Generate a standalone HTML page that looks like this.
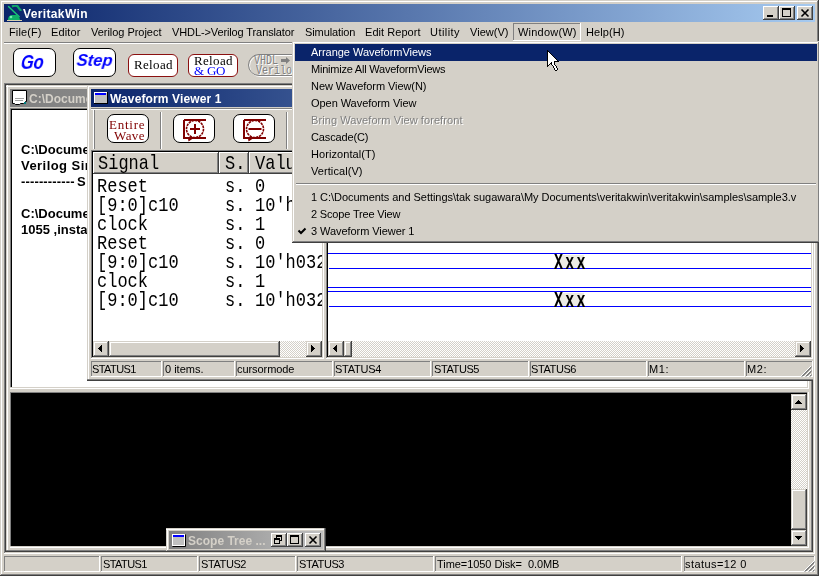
<!DOCTYPE html><html><head><meta charset="utf-8"><style>html,body{margin:0;padding:0;width:819px;height:576px;overflow:hidden;background:#d4d0c8}body>div,body>svg{position:absolute}div div,div svg{position:absolute}.t{will-change:transform}</style></head><body><div style="left:0px;top:0px;width:819px;height:576px;background:#d4d0c8;"></div><div style="left:1px;top:1px;width:817px;height:1px;background:#ffffff;"></div><div style="left:1px;top:1px;width:1px;height:573px;background:#ffffff;"></div><div style="left:817px;top:1px;width:1px;height:574px;background:#808080;"></div><div style="left:1px;top:574px;width:817px;height:1px;background:#808080;"></div><div style="left:818px;top:0px;width:1px;height:576px;background:#404040;"></div><div style="left:0px;top:575px;width:819px;height:1px;background:#404040;"></div><div style="left:4px;top:4px;width:811px;height:18px;background:#0a246a;background:linear-gradient(to right,#0a246a,#a6caf0);"></div><svg style="left:6px;top:5px" width="16" height="16" viewBox="0 0 16 16">
<path d="M2.2 1.2 L13.5 12" stroke="#18c878" stroke-width="1.5"/>
<path d="M6 1.5 Q9 0 11.5 1.2 L13 3.5 L14.5 5 L14.5 6" stroke="#10a868" stroke-width="2.2" fill="none" stroke-linejoin="round"/>
<path d="M2 15 Q2 10.5 6 10 L11 10 Q13.5 11 14 15 Z" fill="#10b068"/>
<circle cx="5" cy="12" r="1.3" fill="#70f0b0"/>
<rect x="1" y="15" width="15" height="1" fill="#d8d0b0"/>
</svg><div class="t" style="left:23px;top:8px;font:bold 12px 'Liberation Sans', sans-serif;line-height:1;color:#fff;white-space:pre;letter-spacing:0.363px;">VeritakWin</div><div style="left:763px;top:6px;width:16px;height:14px;background:#d4d0c8;"></div><div style="left:763px;top:19px;width:16px;height:1px;background:#404040;"></div><div style="left:778px;top:6px;width:1px;height:14px;background:#404040;"></div><div style="left:763px;top:6px;width:15px;height:1px;background:#ffffff;"></div><div style="left:763px;top:6px;width:1px;height:13px;background:#ffffff;"></div><div style="left:764px;top:7px;width:13px;height:1px;background:#d4d0c8;"></div><div style="left:764px;top:7px;width:1px;height:11px;background:#d4d0c8;"></div><div style="left:764px;top:18px;width:14px;height:1px;background:#808080;"></div><div style="left:777px;top:7px;width:1px;height:12px;background:#808080;"></div><div style="left:767px;top:15px;width:6px;height:2px;background:#000000;"></div><div style="left:779px;top:6px;width:16px;height:14px;background:#d4d0c8;"></div><div style="left:779px;top:19px;width:16px;height:1px;background:#404040;"></div><div style="left:794px;top:6px;width:1px;height:14px;background:#404040;"></div><div style="left:779px;top:6px;width:15px;height:1px;background:#ffffff;"></div><div style="left:779px;top:6px;width:1px;height:13px;background:#ffffff;"></div><div style="left:780px;top:7px;width:13px;height:1px;background:#d4d0c8;"></div><div style="left:780px;top:7px;width:1px;height:11px;background:#d4d0c8;"></div><div style="left:780px;top:18px;width:14px;height:1px;background:#808080;"></div><div style="left:793px;top:7px;width:1px;height:12px;background:#808080;"></div><div style="left:782px;top:8px;width:9px;height:9px;background:transparent;border:1px solid #000;border-top-width:2px;box-sizing:border-box;"></div><div style="left:797px;top:6px;width:16px;height:14px;background:#d4d0c8;"></div><div style="left:797px;top:19px;width:16px;height:1px;background:#404040;"></div><div style="left:812px;top:6px;width:1px;height:14px;background:#404040;"></div><div style="left:797px;top:6px;width:15px;height:1px;background:#ffffff;"></div><div style="left:797px;top:6px;width:1px;height:13px;background:#ffffff;"></div><div style="left:798px;top:7px;width:13px;height:1px;background:#d4d0c8;"></div><div style="left:798px;top:7px;width:1px;height:11px;background:#d4d0c8;"></div><div style="left:798px;top:18px;width:14px;height:1px;background:#808080;"></div><div style="left:811px;top:7px;width:1px;height:12px;background:#808080;"></div><svg style="left:797px;top:6px" width="16" height="14"><path d="M4.5 3.5 L11.5 10.5 M11.5 3.5 L4.5 10.5" stroke="#000" stroke-width="1.6"/></svg><div class="t" style="left:9px;top:27px;font:11px 'Liberation Sans', sans-serif;line-height:1;color:#000;white-space:pre;letter-spacing:0.125px;">File(F)</div><div class="t" style="left:51px;top:27px;font:11px 'Liberation Sans', sans-serif;line-height:1;color:#000;white-space:pre;letter-spacing:0.150px;">Editor</div><div class="t" style="left:91px;top:27px;font:11px 'Liberation Sans', sans-serif;line-height:1;color:#000;white-space:pre;letter-spacing:-0.032px;">Verilog Project</div><div class="t" style="left:172px;top:27px;font:11px 'Liberation Sans', sans-serif;line-height:1;color:#000;white-space:pre;letter-spacing:-0.111px;">VHDL-&gt;Verilog Translator</div><div class="t" style="left:305px;top:27px;font:11px 'Liberation Sans', sans-serif;line-height:1;color:#000;white-space:pre;letter-spacing:-0.097px;">Simulation</div><div class="t" style="left:365px;top:27px;font:11px 'Liberation Sans', sans-serif;line-height:1;color:#000;white-space:pre;letter-spacing:0.044px;">Edit Report</div><div class="t" style="left:430px;top:27px;font:11px 'Liberation Sans', sans-serif;line-height:1;color:#000;white-space:pre;letter-spacing:0.438px;">Utility</div><div class="t" style="left:470px;top:27px;font:11px 'Liberation Sans', sans-serif;line-height:1;color:#000;white-space:pre;letter-spacing:0.034px;">View(V)</div><div class="t" style="left:518px;top:27px;font:11px 'Liberation Sans', sans-serif;line-height:1;color:#000;white-space:pre;letter-spacing:0.211px;">Window(W)</div><div class="t" style="left:586px;top:27px;font:11px 'Liberation Sans', sans-serif;line-height:1;color:#000;white-space:pre;letter-spacing:0.104px;">Help(H)</div><div style="left:513px;top:23px;width:68px;height:1px;background:#808080;"></div><div style="left:513px;top:23px;width:1px;height:18px;background:#808080;"></div><div style="left:513px;top:40px;width:68px;height:1px;background:#ffffff;"></div><div style="left:580px;top:23px;width:1px;height:18px;background:#ffffff;"></div><div style="left:4px;top:42px;width:811px;height:1px;background:#808080;"></div><div style="left:4px;top:43px;width:811px;height:1px;background:#ffffff;"></div><div style="left:13px;top:48px;width:43px;height:29px;background:#fff;border:1px solid #000000;border-radius:7px;box-sizing:border-box;"></div><div class="t" style="left:20px;top:51px;font:bold italic 21px 'Liberation Sans', sans-serif;line-height:1;color:#0000ff;white-space:pre;transform:scaleX(0.78) skewX(-8deg);transform-origin:0 100%;">Go</div><div style="left:73px;top:48px;width:43px;height:29px;background:#fff;border:1px solid #000000;border-radius:7px;box-sizing:border-box;"></div><div class="t" style="left:76px;top:52px;font:bold italic 17px 'Liberation Sans', sans-serif;line-height:1;color:#0000ff;white-space:pre;transform:scaleX(0.97) skewX(-6deg);transform-origin:0 100%;">Step</div><div style="left:128px;top:54px;width:50px;height:23px;background:#fff;border:1px solid #8b1010;border-radius:6px;box-sizing:border-box;"></div><div class="t" style="left:134px;top:58px;font:13px 'Liberation Serif', serif;line-height:1;color:#000;white-space:pre;letter-spacing:0.338px;">Reload</div><div style="left:188px;top:54px;width:50px;height:23px;background:#fff;border:1px solid #8b1010;border-radius:6px;box-sizing:border-box;"></div><div class="t" style="left:194px;top:54px;font:13px 'Liberation Serif', serif;line-height:1;color:#000;white-space:pre;letter-spacing:0.338px;">Reload</div><div class="t" style="left:194px;top:64px;font:13px 'Liberation Serif', serif;line-height:1;color:#0000ff;white-space:pre;letter-spacing:-0.214px;">&amp; GO</div><div style="left:248px;top:54px;width:44px;height:23px;overflow:hidden"><div style="left:1px;top:1px;width:70px;height:22px;border:1px solid #fff;border-radius:11px;box-sizing:border-box;"></div><div style="left:0;top:0;width:70px;height:22px;border:1px solid #808080;border-radius:11px;box-sizing:border-box;"></div><div style="left:7px;top:2px;font:10px 'Liberation Mono', monospace;line-height:1;color:#fff;white-space:pre;transform:scaleY(1.35);transform-origin:0 0">VHDL</div><div style="left:6px;top:1px;font:10px 'Liberation Mono', monospace;line-height:1;color:#808080;white-space:pre;transform:scaleY(1.35);transform-origin:0 0">VHDL</div><svg style="left:32px;top:2px" width="12" height="9"><path d="M1 3 H6 V1 L10 4.5 L6 8 V6 H1 Z" fill="#808080"/></svg><div style="left:9px;top:12px;font:10px 'Liberation Mono', monospace;line-height:1;color:#fff;white-space:pre;transform:scaleY(1.35);transform-origin:0 0">Verilog</div><div style="left:8px;top:11px;font:10px 'Liberation Mono', monospace;line-height:1;color:#808080;white-space:pre;transform:scaleY(1.35);transform-origin:0 0">Verilog</div></div><div style="left:4px;top:83px;width:810px;height:1px;background:#808080;"></div><div style="left:4px;top:83px;width:1px;height:471px;background:#808080;"></div><div style="left:5px;top:84px;width:808px;height:1px;background:#404040;"></div><div style="left:5px;top:84px;width:1px;height:469px;background:#404040;"></div><div style="left:814px;top:83px;width:1px;height:471px;background:#ffffff;"></div><div style="left:4px;top:553px;width:811px;height:1px;background:#ffffff;"></div><div style="left:813px;top:84px;width:1px;height:469px;background:#d4d0c8;"></div><div style="left:5px;top:552px;width:809px;height:1px;background:#d4d0c8;"></div><div style="left:7px;top:85px;width:1px;height:467px;background:#ffffff;"></div><div style="left:6px;top:86px;width:81px;height:1px;background:#ffffff;"></div><div style="left:10px;top:89px;width:77px;height:18px;background:#808080;background:linear-gradient(to right,#808080,#c0c0c0 800px);"></div><svg style="left:12px;top:90px" width="16" height="16" viewBox="0 0 16 16">
<path d="M0.5 0.5 H14.5 V11.5 L13.5 11.5 L12.5 12.5 L11.5 13.5 L8.5 13.5 L7.5 14.5 L3.5 14.5 L2.5 13.5 L0.5 13.5 Z" fill="#fff" stroke="#000"/>
<path d="M3 8.5 H12 M3 10.5 H11" stroke="#a0a0a0"/>
<rect x="12" y="12" width="2" height="2" fill="#008080"/>
</svg><div class="t" style="left:29px;top:93px;font:bold 12px 'Liberation Sans', sans-serif;line-height:1;color:#d4d0c8;white-space:pre;">C:\Documents and Settings</div><div style="left:10px;top:108px;width:1px;height:279px;background:#808080;"></div><div style="left:10px;top:108px;width:797px;height:1px;background:#808080;"></div><div style="left:11px;top:109px;width:1px;height:278px;background:#000000;"></div><div style="left:11px;top:109px;width:796px;height:1px;background:#000000;"></div><div style="left:12px;top:110px;width:795px;height:277px;background:#ffffff;"></div><div style="left:10px;top:387px;width:798px;height:1px;background:#d4d0c8;"></div><div style="left:10px;top:388px;width:799px;height:1px;background:#ffffff;"></div><div style="left:807px;top:108px;width:1px;height:280px;background:#d4d0c8;"></div><div style="left:808px;top:108px;width:1px;height:281px;background:#ffffff;"></div><div style="left:811px;top:85px;width:1px;height:308px;background:#808080;"></div><div style="left:812px;top:85px;width:1px;height:308px;background:#404040;"></div><div class="t" style="left:21px;top:143px;font:bold 13px 'Liberation Sans', sans-serif;line-height:1;color:#000;white-space:pre;">C:\Documents and Settings</div><div class="t" style="left:21px;top:159px;font:bold 13px 'Liberation Sans', sans-serif;line-height:1;color:#000;white-space:pre;letter-spacing:0.45px;">Verilog Simulator </div><div class="t" style="left:21px;top:207px;font:bold 13px 'Liberation Sans', sans-serif;line-height:1;color:#000;white-space:pre;">C:\Documents and Settings</div><div class="t" style="left:21px;top:223px;font:bold 13px 'Liberation Sans', sans-serif;line-height:1;color:#000;white-space:pre;">1055 ,instance</div><div class="t" style="left:21px;top:175px;font:bold 13px 'Liberation Sans', sans-serif;line-height:1;color:#000;white-space:pre;letter-spacing:0.142px;">------------</div><div class="t" style="left:77px;top:175px;font:bold 13px 'Liberation Sans', sans-serif;line-height:1;color:#000;white-space:pre;">S</div><div style="left:10px;top:392px;width:1px;height:155px;background:#808080;"></div><div style="left:10px;top:392px;width:797px;height:1px;background:#808080;"></div><div style="left:11px;top:393px;width:1px;height:153px;background:#000000;"></div><div style="left:11px;top:393px;width:796px;height:1px;background:#000000;"></div><div style="left:12px;top:394px;width:779px;height:152px;background:#000000;"></div><div style="left:791px;top:410px;width:16px;height:79px;background:#d4d0c8;background-image:repeating-conic-gradient(#fff 0 25%,#d4d0c8 0 50%);background-size:2px 2px;"></div><div style="left:791px;top:394px;width:16px;height:16px;background:#d4d0c8;"></div><div style="left:791px;top:409px;width:16px;height:1px;background:#404040;"></div><div style="left:806px;top:394px;width:1px;height:16px;background:#404040;"></div><div style="left:791px;top:394px;width:15px;height:1px;background:#d4d0c8;"></div><div style="left:791px;top:394px;width:1px;height:15px;background:#d4d0c8;"></div><div style="left:792px;top:395px;width:13px;height:1px;background:#ffffff;"></div><div style="left:792px;top:395px;width:1px;height:13px;background:#ffffff;"></div><div style="left:792px;top:408px;width:14px;height:1px;background:#808080;"></div><div style="left:805px;top:395px;width:1px;height:14px;background:#808080;"></div><svg style="left:791px;top:394px" width="16" height="16" shape-rendering="crispEdges" fill="#000"><rect x="7" y="6" width="1" height="1"/><rect x="6" y="7" width="3" height="1"/><rect x="5" y="8" width="5" height="1"/><rect x="4" y="9" width="7" height="1"/></svg><div style="left:791px;top:489px;width:16px;height:41px;background:#d4d0c8;"></div><div style="left:791px;top:529px;width:16px;height:1px;background:#404040;"></div><div style="left:806px;top:489px;width:1px;height:41px;background:#404040;"></div><div style="left:791px;top:489px;width:15px;height:1px;background:#d4d0c8;"></div><div style="left:791px;top:489px;width:1px;height:40px;background:#d4d0c8;"></div><div style="left:792px;top:490px;width:13px;height:1px;background:#ffffff;"></div><div style="left:792px;top:490px;width:1px;height:38px;background:#ffffff;"></div><div style="left:792px;top:528px;width:14px;height:1px;background:#808080;"></div><div style="left:805px;top:490px;width:1px;height:39px;background:#808080;"></div><div style="left:791px;top:530px;width:16px;height:16px;background:#d4d0c8;"></div><div style="left:791px;top:545px;width:16px;height:1px;background:#404040;"></div><div style="left:806px;top:530px;width:1px;height:16px;background:#404040;"></div><div style="left:791px;top:530px;width:15px;height:1px;background:#d4d0c8;"></div><div style="left:791px;top:530px;width:1px;height:15px;background:#d4d0c8;"></div><div style="left:792px;top:531px;width:13px;height:1px;background:#ffffff;"></div><div style="left:792px;top:531px;width:1px;height:13px;background:#ffffff;"></div><div style="left:792px;top:544px;width:14px;height:1px;background:#808080;"></div><div style="left:805px;top:531px;width:1px;height:14px;background:#808080;"></div><svg style="left:791px;top:530px" width="16" height="16" shape-rendering="crispEdges" fill="#000"><rect x="4" y="6" width="7" height="1"/><rect x="5" y="7" width="5" height="1"/><rect x="6" y="8" width="3" height="1"/><rect x="7" y="9" width="1" height="1"/></svg><div style="left:10px;top:546px;width:799px;height:1px;background:#d4d0c8;"></div><div style="left:807px;top:392px;width:1px;height:155px;background:#d4d0c8;"></div><div style="left:10px;top:547px;width:799px;height:1px;background:#ffffff;"></div><div style="left:808px;top:392px;width:1px;height:156px;background:#ffffff;"></div><div style="left:6px;top:550px;width:807px;height:1px;background:#808080;"></div><div style="left:811px;top:390px;width:1px;height:161px;background:#808080;"></div><div style="left:6px;top:551px;width:807px;height:1px;background:#404040;"></div><div style="left:812px;top:390px;width:1px;height:162px;background:#404040;"></div><div style="left:166px;top:528px;width:160px;height:24px;background:#d4d0c8;"></div><div style="left:166px;top:529px;width:159px;height:1px;background:#ffffff;"></div><div style="left:167px;top:529px;width:1px;height:22px;background:#ffffff;"></div><div style="left:324px;top:528px;width:1px;height:23px;background:#808080;"></div><div style="left:167px;top:550px;width:158px;height:1px;background:#808080;"></div><div style="left:325px;top:528px;width:1px;height:24px;background:#404040;"></div><div style="left:166px;top:551px;width:160px;height:1px;background:#404040;"></div><div style="left:169px;top:531px;width:154px;height:18px;background:#808080;background:linear-gradient(to right,#808080,#c0c0c0);"></div><svg style="left:171px;top:533px" width="16" height="16" viewBox="0 0 16 16"><rect x="1.5" y="1.5" width="12" height="11" fill="#c0c0c0" stroke="#fff"/><path d="M14.5 1.5 V13.5 H1.5" stroke="#000" fill="none"/><rect x="2" y="2" width="11" height="2" fill="#0000ff"/></svg><div class="t" style="left:188px;top:535px;font:bold 12px 'Liberation Sans', sans-serif;line-height:1;color:#d4d0c8;white-space:pre;letter-spacing:0.013px;">Scope Tree ...</div><div style="left:271px;top:533px;width:16px;height:14px;background:#d4d0c8;"></div><div style="left:271px;top:546px;width:16px;height:1px;background:#404040;"></div><div style="left:286px;top:533px;width:1px;height:14px;background:#404040;"></div><div style="left:271px;top:533px;width:15px;height:1px;background:#ffffff;"></div><div style="left:271px;top:533px;width:1px;height:13px;background:#ffffff;"></div><div style="left:272px;top:534px;width:13px;height:1px;background:#d4d0c8;"></div><div style="left:272px;top:534px;width:1px;height:11px;background:#d4d0c8;"></div><div style="left:272px;top:545px;width:14px;height:1px;background:#808080;"></div><div style="left:285px;top:534px;width:1px;height:12px;background:#808080;"></div><div style="left:276px;top:535px;width:6px;height:6px;background:transparent;border:1px solid #000;border-top-width:2px;box-sizing:border-box;"></div><div style="left:274px;top:538px;width:6px;height:6px;background:#d4d0c8;border:1px solid #000;border-top-width:2px;box-sizing:border-box;"></div><div style="left:287px;top:533px;width:16px;height:14px;background:#d4d0c8;"></div><div style="left:287px;top:546px;width:16px;height:1px;background:#404040;"></div><div style="left:302px;top:533px;width:1px;height:14px;background:#404040;"></div><div style="left:287px;top:533px;width:15px;height:1px;background:#ffffff;"></div><div style="left:287px;top:533px;width:1px;height:13px;background:#ffffff;"></div><div style="left:288px;top:534px;width:13px;height:1px;background:#d4d0c8;"></div><div style="left:288px;top:534px;width:1px;height:11px;background:#d4d0c8;"></div><div style="left:288px;top:545px;width:14px;height:1px;background:#808080;"></div><div style="left:301px;top:534px;width:1px;height:12px;background:#808080;"></div><div style="left:290px;top:535px;width:9px;height:9px;background:transparent;border:1px solid #000;border-top-width:2px;box-sizing:border-box;"></div><div style="left:305px;top:533px;width:16px;height:14px;background:#d4d0c8;"></div><div style="left:305px;top:546px;width:16px;height:1px;background:#404040;"></div><div style="left:320px;top:533px;width:1px;height:14px;background:#404040;"></div><div style="left:305px;top:533px;width:15px;height:1px;background:#ffffff;"></div><div style="left:305px;top:533px;width:1px;height:13px;background:#ffffff;"></div><div style="left:306px;top:534px;width:13px;height:1px;background:#d4d0c8;"></div><div style="left:306px;top:534px;width:1px;height:11px;background:#d4d0c8;"></div><div style="left:306px;top:545px;width:14px;height:1px;background:#808080;"></div><div style="left:319px;top:534px;width:1px;height:12px;background:#808080;"></div><svg style="left:305px;top:533px" width="16" height="14"><path d="M4.5 3.5 L11.5 10.5 M11.5 3.5 L4.5 10.5" stroke="#000" stroke-width="1.6"/></svg><div style="left:4px;top:556px;width:96px;height:1px;background:#808080;"></div><div style="left:4px;top:556px;width:1px;height:16px;background:#808080;"></div><div style="left:4px;top:571px;width:96px;height:1px;background:#ffffff;"></div><div style="left:99px;top:556px;width:1px;height:16px;background:#ffffff;"></div><div style="left:101px;top:556px;width:97px;height:1px;background:#808080;"></div><div style="left:101px;top:556px;width:1px;height:16px;background:#808080;"></div><div style="left:101px;top:571px;width:97px;height:1px;background:#ffffff;"></div><div style="left:197px;top:556px;width:1px;height:16px;background:#ffffff;"></div><div style="left:199px;top:556px;width:97px;height:1px;background:#808080;"></div><div style="left:199px;top:556px;width:1px;height:16px;background:#808080;"></div><div style="left:199px;top:571px;width:97px;height:1px;background:#ffffff;"></div><div style="left:295px;top:556px;width:1px;height:16px;background:#ffffff;"></div><div style="left:297px;top:556px;width:137px;height:1px;background:#808080;"></div><div style="left:297px;top:556px;width:1px;height:16px;background:#808080;"></div><div style="left:297px;top:571px;width:137px;height:1px;background:#ffffff;"></div><div style="left:433px;top:556px;width:1px;height:16px;background:#ffffff;"></div><div style="left:435px;top:556px;width:247px;height:1px;background:#808080;"></div><div style="left:435px;top:556px;width:1px;height:16px;background:#808080;"></div><div style="left:435px;top:571px;width:247px;height:1px;background:#ffffff;"></div><div style="left:681px;top:556px;width:1px;height:16px;background:#ffffff;"></div><div style="left:684px;top:556px;width:131px;height:1px;background:#808080;"></div><div style="left:684px;top:556px;width:1px;height:16px;background:#808080;"></div><div style="left:684px;top:571px;width:131px;height:1px;background:#ffffff;"></div><div style="left:814px;top:556px;width:1px;height:16px;background:#ffffff;"></div><div class="t" style="left:103px;top:559px;font:11px 'Liberation Sans', sans-serif;line-height:1;color:#000;white-space:pre;letter-spacing:-0.568px;">STATUS1</div><div class="t" style="left:201px;top:559px;font:11px 'Liberation Sans', sans-serif;line-height:1;color:#000;white-space:pre;letter-spacing:-0.401px;">STATUS2</div><div class="t" style="left:299px;top:559px;font:11px 'Liberation Sans', sans-serif;line-height:1;color:#000;white-space:pre;letter-spacing:-0.401px;">STATUS3</div><div class="t" style="left:437px;top:559px;font:11px 'Liberation Sans', sans-serif;line-height:1;color:#000;white-space:pre;letter-spacing:-0.060px;">Time=1050 Disk=  0.0MB</div><div class="t" style="left:685px;top:559px;font:11px 'Liberation Sans', sans-serif;line-height:1;color:#000;white-space:pre;letter-spacing:0.427px;">status=12 0</div><svg style="left:803px;top:560px" width="12" height="12"><path d="M11 1 L1 11 M11 5 L5 11 M11 9 L9 11" stroke="#fff" stroke-width="1"/><path d="M11.5 1.5 L1.5 11.5 M11.5 2.5 L2.5 11.5 M11.5 5.5 L5.5 11.5 M11.5 6.5 L6.5 11.5 M11.5 9.5 L9.5 11.5 M11.5 10.5 L10.5 11.5" stroke="#808080" stroke-width="1"/></svg><div style="left:87px;top:85px;width:726px;height:296px;background:#d4d0c8;"></div><div style="left:88px;top:86px;width:725px;height:1px;background:#ffffff;"></div><div style="left:88px;top:86px;width:1px;height:294px;background:#ffffff;"></div><div style="left:87px;top:379px;width:726px;height:1px;background:#808080;"></div><div style="left:87px;top:380px;width:726px;height:1px;background:#404040;"></div><div style="left:91px;top:89px;width:722px;height:18px;background:#0a246a;background:linear-gradient(to right,#0a246a,#a6caf0 730px);"></div><svg style="left:94px;top:92px" width="14" height="12" viewBox="0 0 14 12"><rect x="0" y="0" width="13" height="11" fill="#c0c0c0"/><rect x="0" y="0" width="13" height="1" fill="#fff"/><rect x="0" y="0" width="1" height="11" fill="#fff"/><rect x="1" y="1" width="11" height="2" fill="#0000ff"/><rect x="13" y="0" width="1" height="12" fill="#000"/><rect x="0" y="11" width="14" height="1" fill="#000"/></svg><div class="t" style="left:110px;top:93px;font:bold 12px 'Liberation Sans', sans-serif;line-height:1;color:#fff;white-space:pre;letter-spacing:0.134px;">Waveform Viewer 1</div><div style="left:91px;top:108px;width:722px;height:1px;background:#808080;"></div><div style="left:91px;top:109px;width:722px;height:1px;background:#ffffff;"></div><div style="left:93px;top:110px;width:1px;height:39px;background:#ffffff;"></div><div style="left:94px;top:110px;width:1px;height:39px;background:#808080;"></div><div style="left:160px;top:112px;width:1px;height:37px;background:#808080;"></div><div style="left:161px;top:112px;width:1px;height:37px;background:#ffffff;"></div><div style="left:286px;top:112px;width:1px;height:37px;background:#808080;"></div><div style="left:287px;top:112px;width:1px;height:37px;background:#ffffff;"></div><div style="left:107px;top:114px;width:42px;height:29px;background:#fff;border:1px solid #000000;border-radius:7px;box-sizing:border-box;"></div><div class="t" style="left:109px;top:118px;font:13px 'Liberation Serif', serif;line-height:1;color:#800000;white-space:pre;letter-spacing:0.750px;">Entire</div><div class="t" style="left:114px;top:129px;font:13px 'Liberation Serif', serif;line-height:1;color:#800000;white-space:pre;letter-spacing:0.417px;">Wave</div><div style="left:173px;top:114px;width:42px;height:29px;background:#fff;border:1px solid #000000;border-radius:7px;box-sizing:border-box;"></div><svg style="left:183px;top:119px" width="24" height="23" viewBox="0 0 24 23"><path d="M1 1 H23 M1 1 V19 H23" stroke="#800000" stroke-width="2" fill="none"/><circle cx="12" cy="10" r="8.5" stroke="#800000" stroke-width="1.6" stroke-dasharray="2.5 0.8" fill="none"/><path d="M5 19.5 L5.5 22.5 L10 19.5 Z" fill="#800000"/><path d="M7 10 H17 M12 5 V15" stroke="#800000" stroke-width="2"/></svg><div style="left:233px;top:114px;width:42px;height:29px;background:#fff;border:1px solid #000000;border-radius:7px;box-sizing:border-box;"></div><svg style="left:243px;top:119px" width="24" height="23" viewBox="0 0 24 23"><path d="M1 1 H23 M1 1 V19 H23" stroke="#800000" stroke-width="2" fill="none"/><circle cx="12" cy="10" r="8.5" stroke="#800000" stroke-width="1.6" stroke-dasharray="2.5 0.8" fill="none"/><path d="M5 19.5 L5.5 22.5 L10 19.5 Z" fill="#800000"/><path d="M5.5 10 H18.5" stroke="#800000" stroke-width="2"/></svg><div style="left:91px;top:150px;width:1px;height:209px;background:#808080;"></div><div style="left:91px;top:150px;width:233px;height:1px;background:#808080;"></div><div style="left:92px;top:151px;width:1px;height:207px;background:#000000;"></div><div style="left:92px;top:151px;width:231px;height:1px;background:#000000;"></div><div style="left:93px;top:152px;width:230px;height:206px;background:#ffffff;"></div><div style="left:93px;top:152px;width:126px;height:22px;background:#d4d0c8;"></div><div style="left:93px;top:173px;width:126px;height:1px;background:#404040;"></div><div style="left:218px;top:152px;width:1px;height:22px;background:#404040;"></div><div style="left:93px;top:152px;width:125px;height:1px;background:#ffffff;"></div><div style="left:93px;top:152px;width:1px;height:21px;background:#ffffff;"></div><div style="left:94px;top:153px;width:123px;height:1px;background:#d4d0c8;"></div><div style="left:94px;top:153px;width:1px;height:19px;background:#d4d0c8;"></div><div style="left:94px;top:172px;width:124px;height:1px;background:#808080;"></div><div style="left:217px;top:153px;width:1px;height:20px;background:#808080;"></div><div style="left:219px;top:152px;width:30px;height:22px;background:#d4d0c8;"></div><div style="left:219px;top:173px;width:30px;height:1px;background:#404040;"></div><div style="left:248px;top:152px;width:1px;height:22px;background:#404040;"></div><div style="left:219px;top:152px;width:29px;height:1px;background:#ffffff;"></div><div style="left:219px;top:152px;width:1px;height:21px;background:#ffffff;"></div><div style="left:220px;top:153px;width:27px;height:1px;background:#d4d0c8;"></div><div style="left:220px;top:153px;width:1px;height:19px;background:#d4d0c8;"></div><div style="left:220px;top:172px;width:28px;height:1px;background:#808080;"></div><div style="left:247px;top:153px;width:1px;height:20px;background:#808080;"></div><div style="left:249px;top:152px;width:92px;height:22px;background:#d4d0c8;"></div><div style="left:249px;top:173px;width:92px;height:1px;background:#404040;"></div><div style="left:340px;top:152px;width:1px;height:22px;background:#404040;"></div><div style="left:249px;top:152px;width:91px;height:1px;background:#ffffff;"></div><div style="left:249px;top:152px;width:1px;height:21px;background:#ffffff;"></div><div style="left:250px;top:153px;width:89px;height:1px;background:#d4d0c8;"></div><div style="left:250px;top:153px;width:1px;height:19px;background:#d4d0c8;"></div><div style="left:250px;top:172px;width:90px;height:1px;background:#808080;"></div><div style="left:339px;top:153px;width:1px;height:20px;background:#808080;"></div><div class="t" style="left:98px;top:154px;font:17px 'Liberation Mono', monospace;line-height:1;color:#000;white-space:pre;transform:scaleY(1.15);transform-origin:0 0;">Signal</div><div class="t" style="left:225px;top:154px;font:17px 'Liberation Mono', monospace;line-height:1;color:#000;white-space:pre;transform:scaleY(1.15);transform-origin:0 0;">S.</div><div class="t" style="left:255px;top:154px;font:17px 'Liberation Mono', monospace;line-height:1;color:#000;white-space:pre;transform:scaleY(1.15);transform-origin:0 0;">Value</div><div class="t" style="left:97px;top:177px;font:17px 'Liberation Mono', monospace;line-height:1;color:#000;white-space:pre;transform:scaleY(1.15);transform-origin:0 0;">Reset</div><div class="t" style="left:225px;top:177px;font:17px 'Liberation Mono', monospace;line-height:1;color:#000;white-space:pre;transform:scaleY(1.15);transform-origin:0 0;">s.</div><div class="t" style="left:255px;top:177px;font:17px 'Liberation Mono', monospace;line-height:1;color:#000;white-space:pre;transform:scaleY(1.15);transform-origin:0 0;">0</div><div class="t" style="left:97px;top:196px;font:17px 'Liberation Mono', monospace;line-height:1;color:#000;white-space:pre;transform:scaleY(1.15);transform-origin:0 0;">[9:0]c10</div><div class="t" style="left:225px;top:196px;font:17px 'Liberation Mono', monospace;line-height:1;color:#000;white-space:pre;transform:scaleY(1.15);transform-origin:0 0;">s.</div><div class="t" style="left:255px;top:196px;font:17px 'Liberation Mono', monospace;line-height:1;color:#000;white-space:pre;transform:scaleY(1.15);transform-origin:0 0;">10'h032</div><div class="t" style="left:97px;top:215px;font:17px 'Liberation Mono', monospace;line-height:1;color:#000;white-space:pre;transform:scaleY(1.15);transform-origin:0 0;">clock</div><div class="t" style="left:225px;top:215px;font:17px 'Liberation Mono', monospace;line-height:1;color:#000;white-space:pre;transform:scaleY(1.15);transform-origin:0 0;">s.</div><div class="t" style="left:255px;top:215px;font:17px 'Liberation Mono', monospace;line-height:1;color:#000;white-space:pre;transform:scaleY(1.15);transform-origin:0 0;">1</div><div class="t" style="left:97px;top:234px;font:17px 'Liberation Mono', monospace;line-height:1;color:#000;white-space:pre;transform:scaleY(1.15);transform-origin:0 0;">Reset</div><div class="t" style="left:225px;top:234px;font:17px 'Liberation Mono', monospace;line-height:1;color:#000;white-space:pre;transform:scaleY(1.15);transform-origin:0 0;">s.</div><div class="t" style="left:255px;top:234px;font:17px 'Liberation Mono', monospace;line-height:1;color:#000;white-space:pre;transform:scaleY(1.15);transform-origin:0 0;">0</div><div class="t" style="left:97px;top:253px;font:17px 'Liberation Mono', monospace;line-height:1;color:#000;white-space:pre;transform:scaleY(1.15);transform-origin:0 0;">[9:0]c10</div><div class="t" style="left:225px;top:253px;font:17px 'Liberation Mono', monospace;line-height:1;color:#000;white-space:pre;transform:scaleY(1.15);transform-origin:0 0;">s.</div><div class="t" style="left:255px;top:253px;font:17px 'Liberation Mono', monospace;line-height:1;color:#000;white-space:pre;transform:scaleY(1.15);transform-origin:0 0;">10'h032</div><div class="t" style="left:97px;top:272px;font:17px 'Liberation Mono', monospace;line-height:1;color:#000;white-space:pre;transform:scaleY(1.15);transform-origin:0 0;">clock</div><div class="t" style="left:225px;top:272px;font:17px 'Liberation Mono', monospace;line-height:1;color:#000;white-space:pre;transform:scaleY(1.15);transform-origin:0 0;">s.</div><div class="t" style="left:255px;top:272px;font:17px 'Liberation Mono', monospace;line-height:1;color:#000;white-space:pre;transform:scaleY(1.15);transform-origin:0 0;">1</div><div class="t" style="left:97px;top:291px;font:17px 'Liberation Mono', monospace;line-height:1;color:#000;white-space:pre;transform:scaleY(1.15);transform-origin:0 0;">[9:0]c10</div><div class="t" style="left:225px;top:291px;font:17px 'Liberation Mono', monospace;line-height:1;color:#000;white-space:pre;transform:scaleY(1.15);transform-origin:0 0;">s.</div><div class="t" style="left:255px;top:291px;font:17px 'Liberation Mono', monospace;line-height:1;color:#000;white-space:pre;transform:scaleY(1.15);transform-origin:0 0;">10'h032</div><div style="left:322px;top:150px;width:4px;height:209px;background:#d4d0c8;"></div><div style="left:322px;top:151px;width:1px;height:207px;background:#d4d0c8;"></div><div style="left:323px;top:150px;width:1px;height:209px;background:#ffffff;"></div><div style="left:91px;top:358px;width:233px;height:1px;background:#ffffff;"></div><div style="left:92px;top:357px;width:231px;height:1px;background:#d4d0c8;"></div><div style="left:109px;top:341px;width:197px;height:16px;background:#d4d0c8;background-image:repeating-conic-gradient(#fff 0 25%,#d4d0c8 0 50%);background-size:2px 2px;"></div><div style="left:93px;top:341px;width:16px;height:16px;background:#d4d0c8;"></div><div style="left:93px;top:356px;width:16px;height:1px;background:#404040;"></div><div style="left:108px;top:341px;width:1px;height:16px;background:#404040;"></div><div style="left:93px;top:341px;width:15px;height:1px;background:#d4d0c8;"></div><div style="left:93px;top:341px;width:1px;height:15px;background:#d4d0c8;"></div><div style="left:94px;top:342px;width:13px;height:1px;background:#ffffff;"></div><div style="left:94px;top:342px;width:1px;height:13px;background:#ffffff;"></div><div style="left:94px;top:355px;width:14px;height:1px;background:#808080;"></div><div style="left:107px;top:342px;width:1px;height:14px;background:#808080;"></div><svg style="left:93px;top:341px" width="16" height="16" shape-rendering="crispEdges" fill="#000"><rect x="8" y="4" width="1" height="1"/><rect x="7" y="5" width="2" height="1"/><rect x="6" y="6" width="3" height="1"/><rect x="5" y="7" width="4" height="1"/><rect x="6" y="8" width="3" height="1"/><rect x="7" y="9" width="2" height="1"/><rect x="8" y="10" width="1" height="1"/></svg><div style="left:109px;top:341px;width:171px;height:16px;background:#d4d0c8;"></div><div style="left:109px;top:356px;width:171px;height:1px;background:#404040;"></div><div style="left:279px;top:341px;width:1px;height:16px;background:#404040;"></div><div style="left:109px;top:341px;width:170px;height:1px;background:#d4d0c8;"></div><div style="left:109px;top:341px;width:1px;height:15px;background:#d4d0c8;"></div><div style="left:110px;top:342px;width:168px;height:1px;background:#ffffff;"></div><div style="left:110px;top:342px;width:1px;height:13px;background:#ffffff;"></div><div style="left:110px;top:355px;width:169px;height:1px;background:#808080;"></div><div style="left:278px;top:342px;width:1px;height:14px;background:#808080;"></div><div style="left:306px;top:341px;width:16px;height:16px;background:#d4d0c8;"></div><div style="left:306px;top:356px;width:16px;height:1px;background:#404040;"></div><div style="left:321px;top:341px;width:1px;height:16px;background:#404040;"></div><div style="left:306px;top:341px;width:15px;height:1px;background:#d4d0c8;"></div><div style="left:306px;top:341px;width:1px;height:15px;background:#d4d0c8;"></div><div style="left:307px;top:342px;width:13px;height:1px;background:#ffffff;"></div><div style="left:307px;top:342px;width:1px;height:13px;background:#ffffff;"></div><div style="left:307px;top:355px;width:14px;height:1px;background:#808080;"></div><div style="left:320px;top:342px;width:1px;height:14px;background:#808080;"></div><svg style="left:306px;top:341px" width="16" height="16" shape-rendering="crispEdges" fill="#000"><rect x="5" y="4" width="1" height="1"/><rect x="5" y="5" width="2" height="1"/><rect x="5" y="6" width="3" height="1"/><rect x="5" y="7" width="4" height="1"/><rect x="5" y="8" width="3" height="1"/><rect x="5" y="9" width="2" height="1"/><rect x="5" y="10" width="1" height="1"/></svg><div style="left:326px;top:150px;width:1px;height:209px;background:#808080;"></div><div style="left:326px;top:150px;width:487px;height:1px;background:#808080;"></div><div style="left:327px;top:151px;width:1px;height:207px;background:#000000;"></div><div style="left:327px;top:151px;width:486px;height:1px;background:#000000;"></div><div style="left:328px;top:152px;width:483px;height:206px;background:#ffffff;"></div><div style="left:326px;top:358px;width:487px;height:1px;background:#ffffff;"></div><div style="left:812px;top:150px;width:1px;height:209px;background:#ffffff;"></div><div style="left:327px;top:357px;width:485px;height:1px;background:#d4d0c8;"></div><div style="left:811px;top:151px;width:1px;height:207px;background:#d4d0c8;"></div><div style="left:328px;top:253px;width:483px;height:1px;background:#0000ff;"></div><div style="left:329px;top:268px;width:482px;height:1px;background:#0000ff;"></div><div style="left:328px;top:287px;width:483px;height:1px;background:#0000ff;"></div><div style="left:328px;top:291px;width:483px;height:1px;background:#0000ff;"></div><div style="left:329px;top:306px;width:482px;height:1px;background:#0000ff;"></div><div style="left:560px;top:255px;width:24px;height:13px;background:#ecebe4;"></div><div class="t" style="left:554px;top:253px;font:bold 15px 'Liberation Mono', monospace;line-height:1;color:#000;white-space:pre;letter-spacing:2.250px;transform:scaleY(1.45);transform-origin:0 0;">Xxx</div><div style="left:560px;top:293px;width:24px;height:13px;background:#ecebe4;"></div><div class="t" style="left:554px;top:291px;font:bold 15px 'Liberation Mono', monospace;line-height:1;color:#000;white-space:pre;letter-spacing:2.250px;transform:scaleY(1.45);transform-origin:0 0;">Xxx</div><div style="left:352px;top:341px;width:443px;height:16px;background:#d4d0c8;background-image:repeating-conic-gradient(#fff 0 25%,#d4d0c8 0 50%);background-size:2px 2px;"></div><div style="left:328px;top:341px;width:16px;height:16px;background:#d4d0c8;"></div><div style="left:328px;top:356px;width:16px;height:1px;background:#404040;"></div><div style="left:343px;top:341px;width:1px;height:16px;background:#404040;"></div><div style="left:328px;top:341px;width:15px;height:1px;background:#d4d0c8;"></div><div style="left:328px;top:341px;width:1px;height:15px;background:#d4d0c8;"></div><div style="left:329px;top:342px;width:13px;height:1px;background:#ffffff;"></div><div style="left:329px;top:342px;width:1px;height:13px;background:#ffffff;"></div><div style="left:329px;top:355px;width:14px;height:1px;background:#808080;"></div><div style="left:342px;top:342px;width:1px;height:14px;background:#808080;"></div><svg style="left:328px;top:341px" width="16" height="16" shape-rendering="crispEdges" fill="#000"><rect x="8" y="4" width="1" height="1"/><rect x="7" y="5" width="2" height="1"/><rect x="6" y="6" width="3" height="1"/><rect x="5" y="7" width="4" height="1"/><rect x="6" y="8" width="3" height="1"/><rect x="7" y="9" width="2" height="1"/><rect x="8" y="10" width="1" height="1"/></svg><div style="left:344px;top:341px;width:8px;height:16px;background:#d4d0c8;"></div><div style="left:344px;top:356px;width:8px;height:1px;background:#404040;"></div><div style="left:351px;top:341px;width:1px;height:16px;background:#404040;"></div><div style="left:344px;top:341px;width:7px;height:1px;background:#d4d0c8;"></div><div style="left:344px;top:341px;width:1px;height:15px;background:#d4d0c8;"></div><div style="left:345px;top:342px;width:5px;height:1px;background:#ffffff;"></div><div style="left:345px;top:342px;width:1px;height:13px;background:#ffffff;"></div><div style="left:345px;top:355px;width:6px;height:1px;background:#808080;"></div><div style="left:350px;top:342px;width:1px;height:14px;background:#808080;"></div><div style="left:795px;top:341px;width:16px;height:16px;background:#d4d0c8;"></div><div style="left:795px;top:356px;width:16px;height:1px;background:#404040;"></div><div style="left:810px;top:341px;width:1px;height:16px;background:#404040;"></div><div style="left:795px;top:341px;width:15px;height:1px;background:#d4d0c8;"></div><div style="left:795px;top:341px;width:1px;height:15px;background:#d4d0c8;"></div><div style="left:796px;top:342px;width:13px;height:1px;background:#ffffff;"></div><div style="left:796px;top:342px;width:1px;height:13px;background:#ffffff;"></div><div style="left:796px;top:355px;width:14px;height:1px;background:#808080;"></div><div style="left:809px;top:342px;width:1px;height:14px;background:#808080;"></div><svg style="left:795px;top:341px" width="16" height="16" shape-rendering="crispEdges" fill="#000"><rect x="5" y="4" width="1" height="1"/><rect x="5" y="5" width="2" height="1"/><rect x="5" y="6" width="3" height="1"/><rect x="5" y="7" width="4" height="1"/><rect x="5" y="8" width="3" height="1"/><rect x="5" y="9" width="2" height="1"/><rect x="5" y="10" width="1" height="1"/></svg><div style="left:91px;top:361px;width:71px;height:1px;background:#808080;"></div><div style="left:91px;top:361px;width:1px;height:16px;background:#808080;"></div><div style="left:91px;top:376px;width:71px;height:1px;background:#ffffff;"></div><div style="left:161px;top:361px;width:1px;height:16px;background:#ffffff;"></div><div style="left:163px;top:361px;width:72px;height:1px;background:#808080;"></div><div style="left:163px;top:361px;width:1px;height:16px;background:#808080;"></div><div style="left:163px;top:376px;width:72px;height:1px;background:#ffffff;"></div><div style="left:234px;top:361px;width:1px;height:16px;background:#ffffff;"></div><div style="left:236px;top:361px;width:97px;height:1px;background:#808080;"></div><div style="left:236px;top:361px;width:1px;height:16px;background:#808080;"></div><div style="left:236px;top:376px;width:97px;height:1px;background:#ffffff;"></div><div style="left:332px;top:361px;width:1px;height:16px;background:#ffffff;"></div><div style="left:334px;top:361px;width:97px;height:1px;background:#808080;"></div><div style="left:334px;top:361px;width:1px;height:16px;background:#808080;"></div><div style="left:334px;top:376px;width:97px;height:1px;background:#ffffff;"></div><div style="left:430px;top:361px;width:1px;height:16px;background:#ffffff;"></div><div style="left:432px;top:361px;width:97px;height:1px;background:#808080;"></div><div style="left:432px;top:361px;width:1px;height:16px;background:#808080;"></div><div style="left:432px;top:376px;width:97px;height:1px;background:#ffffff;"></div><div style="left:528px;top:361px;width:1px;height:16px;background:#ffffff;"></div><div style="left:530px;top:361px;width:117px;height:1px;background:#808080;"></div><div style="left:530px;top:361px;width:1px;height:16px;background:#808080;"></div><div style="left:530px;top:376px;width:117px;height:1px;background:#ffffff;"></div><div style="left:646px;top:361px;width:1px;height:16px;background:#ffffff;"></div><div style="left:648px;top:361px;width:97px;height:1px;background:#808080;"></div><div style="left:648px;top:361px;width:1px;height:16px;background:#808080;"></div><div style="left:648px;top:376px;width:97px;height:1px;background:#ffffff;"></div><div style="left:744px;top:361px;width:1px;height:16px;background:#ffffff;"></div><div style="left:746px;top:361px;width:67px;height:1px;background:#808080;"></div><div style="left:746px;top:361px;width:1px;height:16px;background:#808080;"></div><div style="left:746px;top:376px;width:67px;height:1px;background:#ffffff;"></div><div style="left:812px;top:361px;width:1px;height:16px;background:#ffffff;"></div><div class="t" style="left:92px;top:364px;font:11px 'Liberation Sans', sans-serif;line-height:1;color:#000;white-space:pre;letter-spacing:-0.568px;">STATUS1</div><div class="t" style="left:165px;top:364px;font:11px 'Liberation Sans', sans-serif;line-height:1;color:#000;white-space:pre;letter-spacing:-0.004px;">0 items.</div><div class="t" style="left:237px;top:364px;font:11px 'Liberation Sans', sans-serif;line-height:1;color:#000;white-space:pre;letter-spacing:-0.066px;">cursormode</div><div class="t" style="left:335px;top:364px;font:11px 'Liberation Sans', sans-serif;line-height:1;color:#000;white-space:pre;letter-spacing:-0.234px;">STATUS4</div><div class="t" style="left:434px;top:364px;font:11px 'Liberation Sans', sans-serif;line-height:1;color:#000;white-space:pre;letter-spacing:-0.401px;">STATUS5</div><div class="t" style="left:531px;top:364px;font:11px 'Liberation Sans', sans-serif;line-height:1;color:#000;white-space:pre;letter-spacing:-0.401px;">STATUS6</div><div class="t" style="left:649px;top:364px;font:11px 'Liberation Sans', sans-serif;line-height:1;color:#000;white-space:pre;letter-spacing:0.578px;">M1:</div><div class="t" style="left:747px;top:364px;font:11px 'Liberation Sans', sans-serif;line-height:1;color:#000;white-space:pre;letter-spacing:0.578px;">M2:</div><svg style="left:800px;top:365px" width="12" height="12"><path d="M11 1 L1 11 M11 5 L5 11 M11 9 L9 11" stroke="#fff" stroke-width="1"/><path d="M11.5 1.5 L1.5 11.5 M11.5 2.5 L2.5 11.5 M11.5 5.5 L5.5 11.5 M11.5 6.5 L6.5 11.5 M11.5 9.5 L9.5 11.5 M11.5 10.5 L10.5 11.5" stroke="#808080" stroke-width="1"/></svg><div style="left:813px;top:84px;width:1px;height:469px;background:#d4d0c8;"></div><div style="left:814px;top:83px;width:1px;height:471px;background:#ffffff;"></div><div style="left:292px;top:41px;width:527px;height:202px;background:#d4d0c8;"></div><div style="left:293px;top:42px;width:525px;height:1px;background:#ffffff;"></div><div style="left:293px;top:42px;width:1px;height:199px;background:#ffffff;"></div><div style="left:293px;top:241px;width:526px;height:1px;background:#808080;"></div><div style="left:818px;top:42px;width:1px;height:200px;background:#808080;"></div><div style="left:292px;top:242px;width:527px;height:1px;background:#404040;"></div><div style="left:295px;top:44px;width:522px;height:17px;background:#0a246a;"></div><div class="t" style="left:311px;top:47px;font:11px 'Liberation Sans', sans-serif;line-height:1;color:#fff;white-space:pre;letter-spacing:-0.029px;">Arrange WaveformViews</div><div class="t" style="left:311px;top:64px;font:11px 'Liberation Sans', sans-serif;line-height:1;color:#000;white-space:pre;letter-spacing:-0.219px;">Minimize All WaveformViews</div><div class="t" style="left:311px;top:81px;font:11px 'Liberation Sans', sans-serif;line-height:1;color:#000;white-space:pre;letter-spacing:-0.065px;">New Waveform View(N)</div><div class="t" style="left:311px;top:98px;font:11px 'Liberation Sans', sans-serif;line-height:1;color:#000;white-space:pre;letter-spacing:-0.054px;">Open Waveform View</div><div class="t" style="left:312px;top:116px;font:11px 'Liberation Sans', sans-serif;line-height:1;color:#fff;white-space:pre;letter-spacing:0.081px;">Bring Waveform View forefront</div><div class="t" style="left:311px;top:115px;font:11px 'Liberation Sans', sans-serif;line-height:1;color:#808080;white-space:pre;letter-spacing:0.081px;">Bring Waveform View forefront</div><div class="t" style="left:311px;top:132px;font:11px 'Liberation Sans', sans-serif;line-height:1;color:#000;white-space:pre;letter-spacing:-0.132px;">Cascade(C)</div><div class="t" style="left:311px;top:149px;font:11px 'Liberation Sans', sans-serif;line-height:1;color:#000;white-space:pre;letter-spacing:0.078px;">Horizontal(T)</div><div class="t" style="left:311px;top:166px;font:11px 'Liberation Sans', sans-serif;line-height:1;color:#000;white-space:pre;letter-spacing:0.077px;">Vertical(V)</div><div style="left:296px;top:183px;width:520px;height:1px;background:#808080;"></div><div style="left:296px;top:184px;width:520px;height:1px;background:#ffffff;"></div><div class="t" style="left:311px;top:192px;font:11px 'Liberation Sans', sans-serif;line-height:1;color:#000;white-space:pre;letter-spacing:-0.042px;">1 C:\Documents and Settings\tak sugawara\My Documents\veritakwin\veritakwin\samples\sample3.v</div><div class="t" style="left:311px;top:209px;font:11px 'Liberation Sans', sans-serif;line-height:1;color:#000;white-space:pre;letter-spacing:-0.168px;">2 Scope Tree View</div><div class="t" style="left:311px;top:226px;font:11px 'Liberation Sans', sans-serif;line-height:1;color:#000;white-space:pre;letter-spacing:-0.060px;">3 Waveform Viewer 1</div><svg style="left:297px;top:226px" width="10" height="10"><path d="M1.5 4.5 L4 7 L8.5 2.5" stroke="#000" stroke-width="2" fill="none"/></svg><svg style="left:547px;top:50px" width="12" height="21" shape-rendering="crispEdges"><rect x="0" y="0" width="1" height="1" fill="#000"/><rect x="0" y="1" width="1" height="1" fill="#000"/><rect x="1" y="1" width="1" height="1" fill="#000"/><rect x="0" y="2" width="1" height="1" fill="#000"/><rect x="1" y="2" width="1" height="1" fill="#fff"/><rect x="2" y="2" width="1" height="1" fill="#000"/><rect x="0" y="3" width="1" height="1" fill="#000"/><rect x="1" y="3" width="1" height="1" fill="#fff"/><rect x="2" y="3" width="1" height="1" fill="#fff"/><rect x="3" y="3" width="1" height="1" fill="#000"/><rect x="0" y="4" width="1" height="1" fill="#000"/><rect x="1" y="4" width="1" height="1" fill="#fff"/><rect x="2" y="4" width="1" height="1" fill="#fff"/><rect x="3" y="4" width="1" height="1" fill="#fff"/><rect x="4" y="4" width="1" height="1" fill="#000"/><rect x="0" y="5" width="1" height="1" fill="#000"/><rect x="1" y="5" width="1" height="1" fill="#fff"/><rect x="2" y="5" width="1" height="1" fill="#fff"/><rect x="3" y="5" width="1" height="1" fill="#fff"/><rect x="4" y="5" width="1" height="1" fill="#fff"/><rect x="5" y="5" width="1" height="1" fill="#000"/><rect x="0" y="6" width="1" height="1" fill="#000"/><rect x="1" y="6" width="1" height="1" fill="#fff"/><rect x="2" y="6" width="1" height="1" fill="#fff"/><rect x="3" y="6" width="1" height="1" fill="#fff"/><rect x="4" y="6" width="1" height="1" fill="#fff"/><rect x="5" y="6" width="1" height="1" fill="#fff"/><rect x="6" y="6" width="1" height="1" fill="#000"/><rect x="0" y="7" width="1" height="1" fill="#000"/><rect x="1" y="7" width="1" height="1" fill="#fff"/><rect x="2" y="7" width="1" height="1" fill="#fff"/><rect x="3" y="7" width="1" height="1" fill="#fff"/><rect x="4" y="7" width="1" height="1" fill="#fff"/><rect x="5" y="7" width="1" height="1" fill="#fff"/><rect x="6" y="7" width="1" height="1" fill="#fff"/><rect x="7" y="7" width="1" height="1" fill="#000"/><rect x="0" y="8" width="1" height="1" fill="#000"/><rect x="1" y="8" width="1" height="1" fill="#fff"/><rect x="2" y="8" width="1" height="1" fill="#fff"/><rect x="3" y="8" width="1" height="1" fill="#fff"/><rect x="4" y="8" width="1" height="1" fill="#fff"/><rect x="5" y="8" width="1" height="1" fill="#fff"/><rect x="6" y="8" width="1" height="1" fill="#fff"/><rect x="7" y="8" width="1" height="1" fill="#fff"/><rect x="8" y="8" width="1" height="1" fill="#000"/><rect x="0" y="9" width="1" height="1" fill="#000"/><rect x="1" y="9" width="1" height="1" fill="#fff"/><rect x="2" y="9" width="1" height="1" fill="#fff"/><rect x="3" y="9" width="1" height="1" fill="#fff"/><rect x="4" y="9" width="1" height="1" fill="#fff"/><rect x="5" y="9" width="1" height="1" fill="#fff"/><rect x="6" y="9" width="1" height="1" fill="#fff"/><rect x="7" y="9" width="1" height="1" fill="#fff"/><rect x="8" y="9" width="1" height="1" fill="#fff"/><rect x="9" y="9" width="1" height="1" fill="#000"/><rect x="0" y="10" width="1" height="1" fill="#000"/><rect x="1" y="10" width="1" height="1" fill="#fff"/><rect x="2" y="10" width="1" height="1" fill="#fff"/><rect x="3" y="10" width="1" height="1" fill="#fff"/><rect x="4" y="10" width="1" height="1" fill="#fff"/><rect x="5" y="10" width="1" height="1" fill="#fff"/><rect x="6" y="10" width="1" height="1" fill="#fff"/><rect x="7" y="10" width="1" height="1" fill="#fff"/><rect x="8" y="10" width="1" height="1" fill="#fff"/><rect x="9" y="10" width="1" height="1" fill="#fff"/><rect x="10" y="10" width="1" height="1" fill="#000"/><rect x="0" y="11" width="1" height="1" fill="#000"/><rect x="1" y="11" width="1" height="1" fill="#fff"/><rect x="2" y="11" width="1" height="1" fill="#fff"/><rect x="3" y="11" width="1" height="1" fill="#fff"/><rect x="4" y="11" width="1" height="1" fill="#fff"/><rect x="5" y="11" width="1" height="1" fill="#fff"/><rect x="6" y="11" width="1" height="1" fill="#fff"/><rect x="7" y="11" width="1" height="1" fill="#000"/><rect x="8" y="11" width="1" height="1" fill="#000"/><rect x="9" y="11" width="1" height="1" fill="#000"/><rect x="10" y="11" width="1" height="1" fill="#000"/><rect x="11" y="11" width="1" height="1" fill="#000"/><rect x="0" y="12" width="1" height="1" fill="#000"/><rect x="1" y="12" width="1" height="1" fill="#fff"/><rect x="2" y="12" width="1" height="1" fill="#fff"/><rect x="3" y="12" width="1" height="1" fill="#fff"/><rect x="4" y="12" width="1" height="1" fill="#000"/><rect x="5" y="12" width="1" height="1" fill="#fff"/><rect x="6" y="12" width="1" height="1" fill="#fff"/><rect x="7" y="12" width="1" height="1" fill="#000"/><rect x="0" y="13" width="1" height="1" fill="#000"/><rect x="1" y="13" width="1" height="1" fill="#fff"/><rect x="2" y="13" width="1" height="1" fill="#fff"/><rect x="3" y="13" width="1" height="1" fill="#000"/><rect x="4" y="13" width="1" height="1" fill="#000"/><rect x="5" y="13" width="1" height="1" fill="#fff"/><rect x="6" y="13" width="1" height="1" fill="#fff"/><rect x="7" y="13" width="1" height="1" fill="#000"/><rect x="0" y="14" width="1" height="1" fill="#000"/><rect x="1" y="14" width="1" height="1" fill="#fff"/><rect x="2" y="14" width="1" height="1" fill="#000"/><rect x="4" y="14" width="1" height="1" fill="#000"/><rect x="5" y="14" width="1" height="1" fill="#fff"/><rect x="6" y="14" width="1" height="1" fill="#fff"/><rect x="7" y="14" width="1" height="1" fill="#000"/><rect x="0" y="15" width="1" height="1" fill="#000"/><rect x="1" y="15" width="1" height="1" fill="#000"/><rect x="5" y="15" width="1" height="1" fill="#000"/><rect x="6" y="15" width="1" height="1" fill="#fff"/><rect x="7" y="15" width="1" height="1" fill="#fff"/><rect x="8" y="15" width="1" height="1" fill="#000"/><rect x="0" y="16" width="1" height="1" fill="#000"/><rect x="6" y="16" width="1" height="1" fill="#000"/><rect x="7" y="16" width="1" height="1" fill="#fff"/><rect x="8" y="16" width="1" height="1" fill="#fff"/><rect x="9" y="16" width="1" height="1" fill="#000"/><rect x="6" y="17" width="1" height="1" fill="#000"/><rect x="7" y="17" width="1" height="1" fill="#fff"/><rect x="8" y="17" width="1" height="1" fill="#fff"/><rect x="9" y="17" width="1" height="1" fill="#000"/><rect x="7" y="18" width="1" height="1" fill="#000"/><rect x="8" y="18" width="1" height="1" fill="#fff"/><rect x="9" y="18" width="1" height="1" fill="#fff"/><rect x="10" y="18" width="1" height="1" fill="#000"/><rect x="7" y="19" width="1" height="1" fill="#000"/><rect x="8" y="19" width="1" height="1" fill="#fff"/><rect x="9" y="19" width="1" height="1" fill="#fff"/><rect x="10" y="19" width="1" height="1" fill="#000"/><rect x="8" y="20" width="1" height="1" fill="#000"/><rect x="9" y="20" width="1" height="1" fill="#000"/></svg></body></html>
